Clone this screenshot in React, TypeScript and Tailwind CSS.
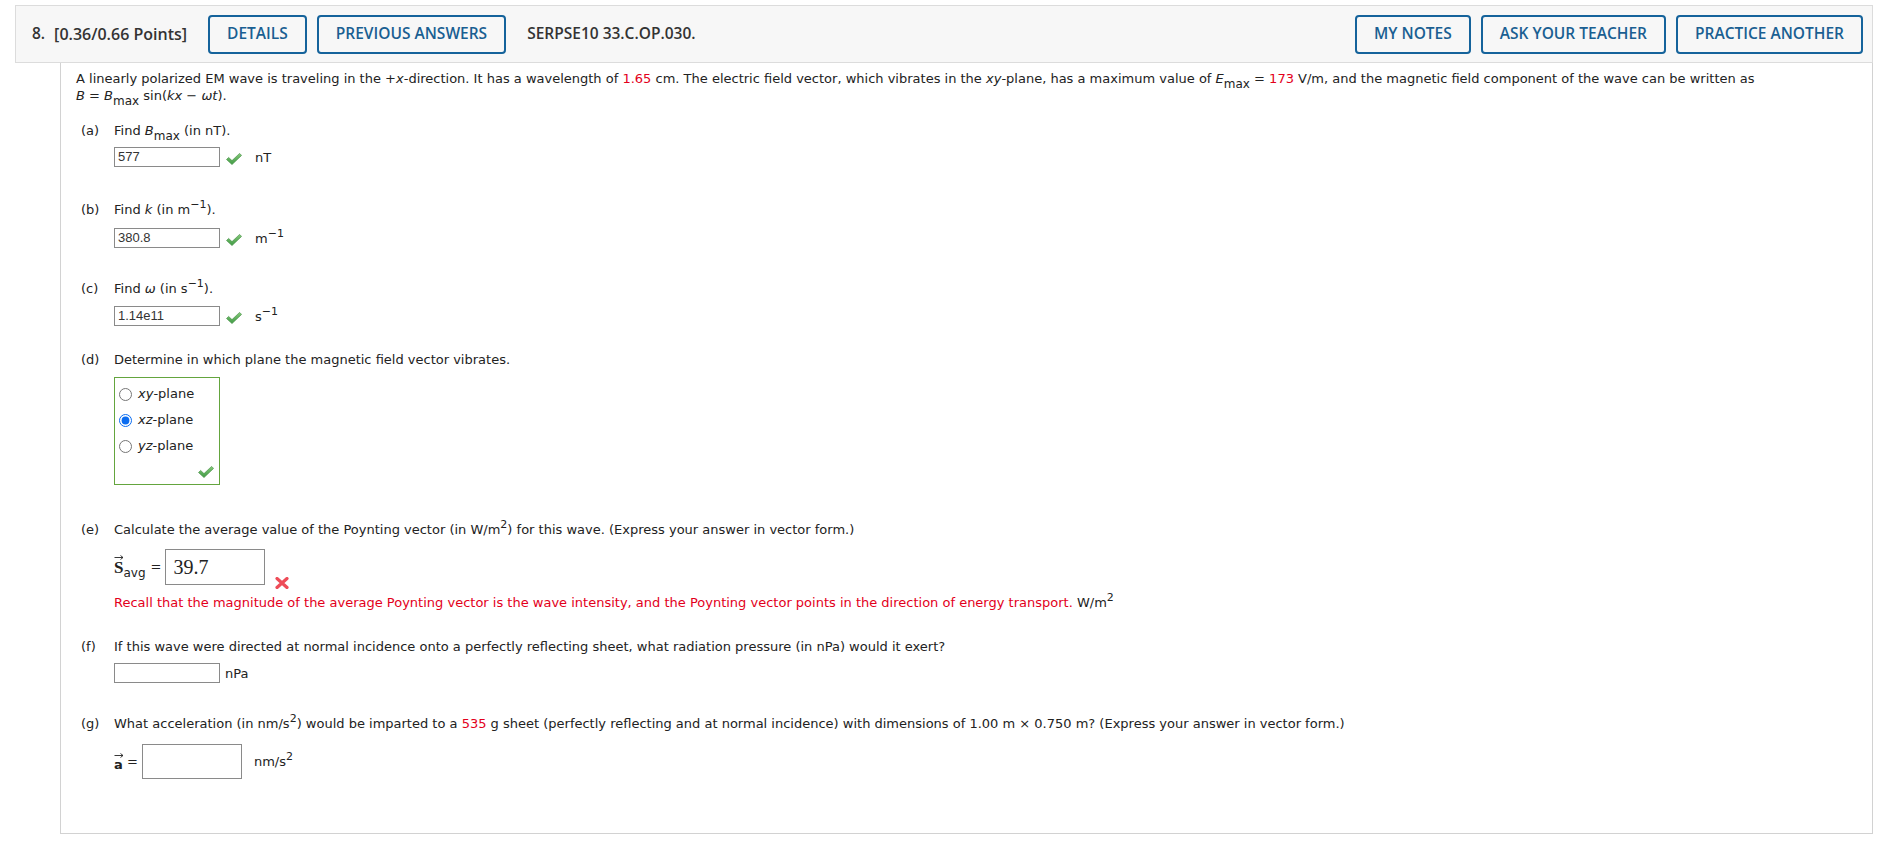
import React from "react";

const RED = "text-[#e3001b]";

function Check() {
  return (
    <svg width="16" height="12" viewBox="0 0 16 12" className="block">
      <defs>
        <linearGradient id="chk" x1="0" y1="0" x2="0" y2="1">
          <stop offset="0" stopColor="#86c97a" />
          <stop offset="1" stopColor="#3f9a44" />
        </linearGradient>
      </defs>
      <polygon points="0.5,6.5 2.6,4.4 6,7.6 13.6,0.4 15.6,2.4 6,11.6" fill="url(#chk)" stroke="#3d8a3d" strokeWidth="0.6" strokeLinejoin="round" />
    </svg>
  );
}

function Cross() {
  return (
    <svg width="14" height="12" viewBox="0 0 14 12" className="block">
      <path d="M2 1.5 L12 10.5 M12 1.5 L2 10.5" stroke="#ee4c58" strokeWidth="3.2" strokeLinecap="round" />
    </svg>
  );
}

function Arrow() {
  return (
    <svg width="10" height="5" viewBox="0 0 10 5" className="block">
      <path d="M0.5 2.5 H9 M6.5 0.5 L9 2.5 L6.5 4.5" stroke="#222" strokeWidth="0.9" fill="none" />
    </svg>
  );
}

function Sub({ children }: { children: React.ReactNode }) {
  return <span className="relative top-[5px] text-[12px] leading-none">{children}</span>;
}

function Sup({ children }: { children: React.ReactNode }) {
  return <span className="relative -top-[6px] text-[11px] leading-none">{children}</span>;
}

function Field({ value, className }: { value?: string; className: string }) {
  return (
    <div className={`flex items-center border border-[#8a8a8a] bg-white pl-[3px] font-['Liberation_Sans',sans-serif] text-[13px] text-[#333] ${className}`}>
      {value}
    </div>
  );
}

function Part({ label, className, children }: { label: string; className: string; children: React.ReactNode }) {
  return (
    <div className={`flex pl-[5px] ${className}`}>
      <div className="w-[33px] shrink-0 leading-[17px]">({label})</div>
      <div className="flex-1">{children}</div>
    </div>
  );
}

function HeaderButton({ children }: { children: React.ReactNode }) {
  return (
    <div className="flex h-[39px] items-center rounded-[4px] border-2 border-[#15639b] px-[17px] text-[#1a5f92]">
      {children}
    </div>
  );
}

export default function App() {
  return (
    <div className="min-h-[850px] w-full bg-white pl-[15px] pt-[5px] text-[#222]">
      <div className="w-[1858px]">
        <header className="flex h-[58px] items-center border border-[#dcdcdc] bg-[#f7f7f7] pl-[16px] pr-[9px] font-['Open_Sans',sans-serif] text-[15.5px] font-semibold">
          <span className="text-[#333]">8.</span>
          <span className="ml-[9px] text-[16px] text-[#333]">[0.36/0.66 Points]</span>
          <div className="ml-[21px] flex gap-[10px]">
            <HeaderButton>DETAILS</HeaderButton>
            <HeaderButton>PREVIOUS ANSWERS</HeaderButton>
          </div>
          <span className="ml-[21px] text-[#333]">SERPSE10 33.C.OP.030.</span>
          <div className="flex-1" />
          <div className="flex gap-[10px]">
            <HeaderButton>MY NOTES</HeaderButton>
            <HeaderButton>ASK YOUR TEACHER</HeaderButton>
            <HeaderButton>PRACTICE ANOTHER</HeaderButton>
          </div>
        </header>

        <div className="ml-[45px] h-[771px] border-x border-b border-[#d2d2d2] pl-[15px] pt-[7px] font-['DejaVu_Sans',Verdana,sans-serif] text-[13px]">
          <p className="leading-[17px]">
            A linearly polarized EM wave is traveling in the +<i>x</i>-direction. It has a wavelength of{" "}
            <span className={RED}>1.65</span> cm. The electric field vector, which vibrates in the <i>xy</i>-plane, has a
            maximum value of <i>E</i>
            <Sub>max</Sub> = <span className={RED}>173</span> V/m, and the magnetic field component of the wave can be
            written as
            <br />
            <i>B</i> = <i>B</i>
            <Sub>max</Sub> sin(<i>kx</i> − <i>ωt</i>).
          </p>

          <Part label="a" className="mt-[18px]">
            <div className="leading-[17px]">
              Find <i>B</i>
              <Sub>max</Sub> (in nT).
            </div>
            <div className="mt-[8px] flex h-[20px] items-center">
              <Field value="577" className="h-[20px] w-[106px]" />
              <span className="ml-[6px] mt-[3px]"><Check /></span>
              <span className="ml-[13px] leading-none">nT</span>
            </div>
          </Part>

          <Part label="b" className="mt-[34px]">
            <div className="leading-[17px]">
              Find <i>k</i> (in m<Sup>−1</Sup>).
            </div>
            <div className="mt-[10px] flex h-[20px] items-center">
              <Field value="380.8" className="h-[20px] w-[106px]" />
              <span className="ml-[6px] mt-[3px]"><Check /></span>
              <span className="ml-[13px] leading-none">
                m<Sup>−1</Sup>
              </span>
            </div>
          </Part>

          <Part label="c" className="mt-[32px]">
            <div className="leading-[17px]">
              Find <i>ω</i> (in s<Sup>−1</Sup>).
            </div>
            <div className="mt-[9px] flex h-[20px] items-center">
              <Field value="1.14e11" className="h-[20px] w-[106px]" />
              <span className="ml-[6px] mt-[3px]"><Check /></span>
              <span className="ml-[13px] leading-none">
                s<Sup>−1</Sup>
              </span>
            </div>
          </Part>

          <Part label="d" className="mt-[25px]">
            <div className="leading-[17px]">Determine in which plane the magnetic field vector vibrates.</div>
            <div className="mt-[9px] flex h-[108px] w-[106px] flex-col border border-[#64a53e] pl-[4px] pr-[5px] pt-[3px]">
              {[
                ["xy", false],
                ["xz", true],
                ["yz", false],
              ].map(([p, on]) => (
                <label key={p as string} className="flex h-[26px] items-center">
                  <input type="radio" name="plane" readOnly checked={on as boolean} className="m-0 h-[13px] w-[13px] accent-[#0a6cf0]" />
                  <span className="ml-[6px]">
                    <i>{p as string}</i>-plane
                  </span>
                </label>
              ))}
              <div className="mt-[7px] flex justify-end">
                <Check />
              </div>
            </div>
          </Part>

          <Part label="e" className="mt-[36px]">
            <div className="leading-[17px]">
              Calculate the average value of the Poynting vector (in W/m<Sup>2</Sup>) for this wave. (Express your answer in
              vector form.)
            </div>
            <div className="mt-[11px] flex h-[40px] items-start">
              <span className="mt-[6px] inline-flex flex-col items-start">
                <Arrow />
                <span className="flex items-end">
                  <span className="font-['Liberation_Serif',serif] text-[17px] font-bold leading-[15px]">S</span>
                  <span className="relative top-[4px] text-[12px] leading-none">avg</span>
                </span>
              </span>
              <span className="ml-[5px] mt-[9px] leading-[17px]">=</span>
              <div className="ml-[4px] flex h-[36px] w-[100px] items-center border border-[#8a8a8a] bg-white pl-[7px] font-['Liberation_Serif',serif] text-[20px] text-[#222]">
                39.7
              </div>
              <span className="ml-[10px] mt-[28px]">
                <Cross />
              </span>
            </div>
            <div className="mt-[5px] leading-[17px]">
              <span className={RED}>
                Recall that the magnitude of the average Poynting vector is the wave intensity, and the Poynting vector points in
                the direction of energy transport.
              </span>{" "}
              W/m<Sup>2</Sup>
            </div>
          </Part>

          <Part label="f" className="mt-[27px]">
            <div className="leading-[17px]">
              If this wave were directed at normal incidence onto a perfectly reflecting sheet, what radiation pressure (in nPa)
              would it exert?
            </div>
            <div className="mt-[8px] flex h-[20px] items-center">
              <Field className="h-[20px] w-[106px]" />
              <span className="ml-[5px] leading-none">nPa</span>
            </div>
          </Part>

          <Part label="g" className="mt-[32px]">
            <div className="leading-[17px]">
              What acceleration (in nm/s<Sup>2</Sup>) would be imparted to a <span className={RED}>535</span> g sheet
              (perfectly reflecting and at normal incidence) with dimensions of 1.00 m × 0.750 m? (Express your answer in
              vector form.)
            </div>
            <div className="mt-[12px] flex h-[35px] items-center">
              <span className="inline-flex flex-col items-start">
                <Arrow />
                <span className="font-bold leading-[13px]">a</span>
              </span>
              <span className="ml-[3px] leading-none">=</span>
              <div className="ml-[4px] h-[35px] w-[100px] border border-[#8a8a8a] bg-white" />
              <span className="ml-[12px] leading-none">
                nm/s<Sup>2</Sup>
              </span>
            </div>
          </Part>
        </div>
      </div>
    </div>
  );
}
